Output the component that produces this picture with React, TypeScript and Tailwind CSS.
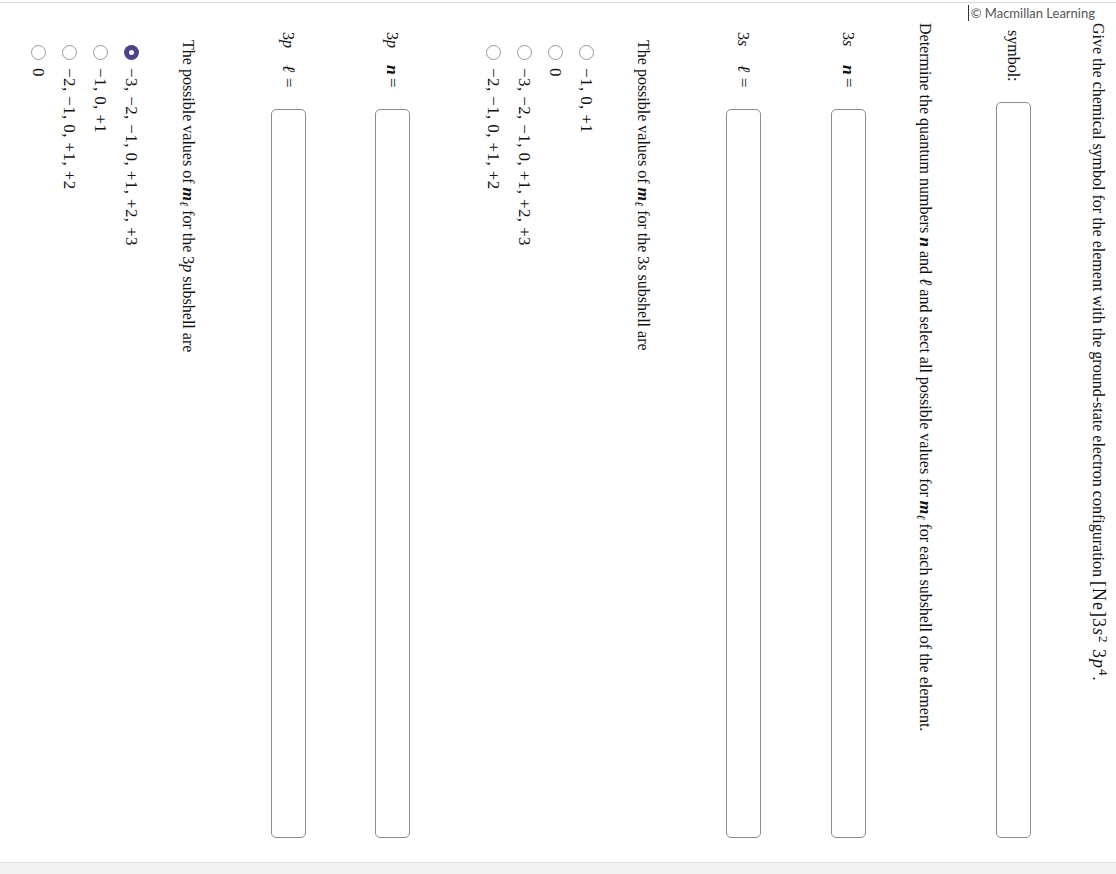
import React from "react";

function Box() {
  return <div className="ml-[20px] mr-[24px] h-[35px] flex-1 rounded-[5px] border border-[#8c8c8c] bg-white" />;
}

function QRow({ shell, q }: { shell: React.ReactNode; q: React.ReactNode }) {
  return (
    <div className="flex h-[35px] items-center pl-[9px] leading-[20px]">
      <span className="inline-block w-[33px]">{shell}</span>
      <span className="inline-block w-[13px] text-[17px]">{q}</span>
      <span className="inline-block w-[10px] text-[17px]">=</span>
      <div className="ml-[21px] mr-[24px] h-[35px] flex-1 rounded-[5px] border border-[#8c8c8c] bg-white" />
    </div>
  );
}

function Radio({ label, checked }: { label: string; checked?: boolean }) {
  return (
    <div className="flex h-[31px] items-center pl-[22px] leading-[20px]">
      {checked ? (
        <span className="flex h-[15px] w-[15px] items-center justify-center rounded-full bg-[#4d4485]">
          <span className="h-[5px] w-[5px] rounded-full bg-white" />
        </span>
      ) : (
        <span className="h-[15px] w-[15px] rounded-full border border-[#9a9a9a] bg-white" />
      )}
      <span className="ml-[8px] text-[17px] tracking-[0.4px]">{label}</span>
    </div>
  );
}

const Ml = () => (
  <span className="text-[17.5px] leading-none">
    <b className="italic">m</b>
    <sub className="text-[12px] italic leading-none">ℓ</sub>
  </span>
);

const N = () => <b className="text-[17.5px] italic leading-none">n</b>;
const L = () => <i className="text-[17.5px] leading-none">ℓ</i>;

export default function App() {
  return (
    <div className="h-[874px] w-[1116px] bg-[#f2f2f2]">
      <div className="relative mt-[2px] h-[861px] overflow-hidden border-y border-[#dcdcdc] bg-white">
        <div className="absolute right-[21px] top-[2px] border-l border-[#333] pl-[2px] font-['Lato',sans-serif] text-[13px] leading-[16px] text-[#555]">
          © Macmillan Learning
        </div>
        <div className="flex h-[1116px] w-[859px] origin-top-left translate-x-[1116px] rotate-90 flex-col pl-[20px] font-['Liberation_Serif',serif] text-[16px] leading-[24px] text-[#111]">
          <p className="mt-[6px] h-[24px] whitespace-nowrap">
            Give the chemical symbol for the element with the ground-state electron configuration{" "}
            <span className="text-[18px] leading-none tracking-[1px]">
              [Ne]3<i>s</i>
              <sup className="text-[13px] leading-none">2</sup> 3<i>p</i>
              <sup className="text-[13px] leading-none">4</sup>
            </span>
            .
          </p>
          <div className="mt-[55px] flex h-[35px] items-center pl-[7px]">
            <span>symbol:</span>
            <Box />
          </div>
          <p className="mt-[59px] h-[24px] whitespace-nowrap">
            Determine the quantum numbers <N /> and <L /> and select all possible values for <Ml /> for each
            subshell of the element.
          </p>
          <div className="mt-[47px]">
            <QRow shell={<>3<i>s</i></>} q={<N />} />
          </div>
          <div className="mt-[70px]">
            <QRow shell={<>3<i>s</i></>} q={<L />} />
          </div>
          <p className="mt-[71px] h-[24px] whitespace-nowrap pl-[17px]">
            The possible values of <Ml /> for the 3<i>s</i> subshell are
          </p>
          <div className="mt-[29px]">
            <Radio label="−1, 0, +1" />
            <Radio label="0" />
            <Radio label="−3, −2, −1, 0, +1, +2, +3" />
            <Radio label="−2, −1, 0, +1, +2" />
          </div>
          <div className="mt-[68px]">
            <QRow shell={<>3<i>p</i></>} q={<N />} />
          </div>
          <div className="mt-[69px]">
            <QRow shell={<>3<i>p</i></>} q={<L />} />
          </div>
          <p className="mt-[71px] h-[24px] whitespace-nowrap pl-[17px]">
            The possible values of <Ml /> for the 3<i>p</i> subshell are
          </p>
          <div className="mt-[29px]">
            <Radio label="−3, −2, −1, 0, +1, +2, +3" checked />
            <Radio label="−1, 0, +1" />
            <Radio label="−2, −1, 0, +1, +2" />
            <Radio label="0" />
          </div>
        </div>
      </div>
    </div>
  );
}
